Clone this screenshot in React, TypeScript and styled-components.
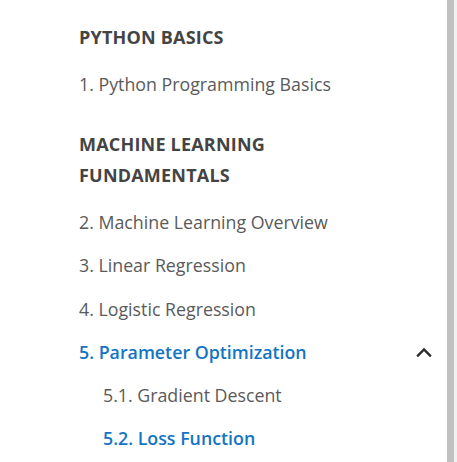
import React from 'react';
import styled, { createGlobalStyle } from 'styled-components';

interface NavItem {
  label: string;
  active?: boolean;
  expanded?: boolean;
  children?: NavItem[];
}

interface NavSection {
  title: string;
  items: NavItem[];
}

const sections: NavSection[] = [
  {
    title: 'Python Basics',
    items: [{ label: '1. Python Programming Basics' }],
  },
  {
    title: 'Machine Learning Fundamentals',
    items: [
      { label: '2. Machine Learning Overview' },
      { label: '3. Linear Regression' },
      { label: '4. Logistic Regression' },
      {
        label: '5. Parameter Optimization',
        active: true,
        expanded: true,
        children: [
          { label: '5.1. Gradient Descent' },
          { label: '5.2. Loss Function', active: true },
        ],
      },
    ],
  },
];

function Chevron() {
  return (
    <svg width="18" height="16" viewBox="0 0 18 16" fill="none">
      <path
        d="M3 11.5 L9 5.5 L15 11.5"
        stroke="#2b2b2b"
        strokeWidth="2.4"
        strokeLinecap="square"
      />
    </svg>
  );
}

function App() {
  return (
    <>
      <GlobalStyle />
      <Page>
        <Sidebar>
          {sections.map((section) => (
            <Section key={section.title}>
              <SectionTitle>{section.title}</SectionTitle>
              {section.items.map((item) => (
                <React.Fragment key={item.label}>
                  <Item $active={item.active}>
                    <span>{item.label}</span>
                    {item.children ? (
                      <Toggle>
                        <Chevron />
                      </Toggle>
                    ) : null}
                  </Item>
                  {item.expanded &&
                    item.children?.map((child) => (
                      <SubItem key={child.label} $active={child.active}>
                        {child.label}
                      </SubItem>
                    ))}
                </React.Fragment>
              ))}
            </Section>
          ))}
        </Sidebar>
        <Scrollbar>
          <Thumb />
        </Scrollbar>
      </Page>
    </>
  );
}

const GlobalStyle = createGlobalStyle`
  html, body {
    margin: 0;
    padding: 0;
    background: #ffffff;
  }
  body {
    font-family: 'Open Sans', 'Noto Sans', sans-serif;
  }
`;

const Page = styled.div`
  display: flex;
  width: 457px;
  height: 462px;
  overflow: hidden;
`;

const Sidebar = styled.nav`
  flex: 1;
  padding: 22px 0 0 79px;
  box-sizing: border-box;
`;

const Section = styled.div`
  display: flex;
  flex-direction: column;
  margin-bottom: 23px;
`;

const SectionTitle = styled.div`
  font-size: 18px;
  font-weight: 700;
  line-height: 31.5px;
  letter-spacing: 0.2px;
  text-transform: uppercase;
  color: #444444;
  width: 220px;
  margin-bottom: 9px;
`;

const Item = styled.div<{ $active?: boolean }>`
  display: flex;
  align-items: center;
  justify-content: space-between;
  height: 43.2px;
  padding-right: 14px;
  font-size: 17.8px;
  font-weight: ${(p) => (p.$active ? 600 : 400)};
  color: ${(p) => (p.$active ? '#1474c4' : '#5a5a5a')};
`;

const SubItem = styled(Item)`
  padding-left: 24px;
`;

const Toggle = styled.span`
  display: flex;
  align-items: center;
`;

const Scrollbar = styled.div`
  width: 10px;
  background: #f1f1f1;
  display: flex;
`;

const Thumb = styled.div`
  width: 7px;
  background: #c1c1c1;
`;

export default App;
